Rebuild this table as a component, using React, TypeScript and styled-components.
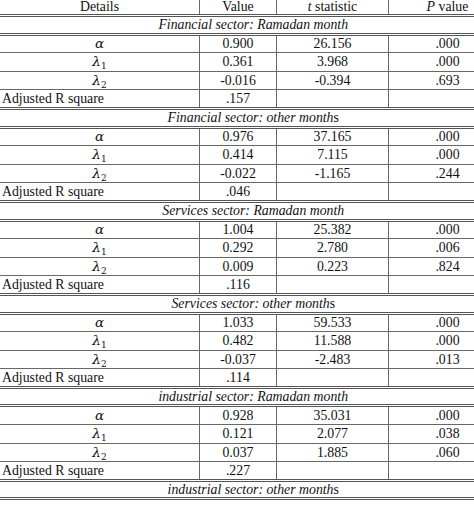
import React from "react";
import styled, { createGlobalStyle } from "styled-components";

interface Row {
  label: "alpha" | "l1" | "l2" | "adj";
  value: string;
  t?: string;
  p?: string;
}

interface Section {
  title: string;
  tail: string;
  rows: Row[];
}

const sections: Section[] = [
  {
    title: "Financial sector: Ramadan month",
    tail: "",
    rows: [
      { label: "alpha", value: "0.900", t: "26.156", p: ".000" },
      { label: "l1", value: "0.361", t: "3.968", p: ".000" },
      { label: "l2", value: "-0.016", t: "-0.394", p: ".693" },
      { label: "adj", value: ".157" },
    ],
  },
  {
    title: "Financial sector: other month",
    tail: "s",
    rows: [
      { label: "alpha", value: "0.976", t: "37.165", p: ".000" },
      { label: "l1", value: "0.414", t: "7.115", p: ".000" },
      { label: "l2", value: "-0.022", t: "-1.165", p: ".244" },
      { label: "adj", value: ".046" },
    ],
  },
  {
    title: "Services sector: Ramadan month",
    tail: "",
    rows: [
      { label: "alpha", value: "1.004", t: "25.382", p: ".000" },
      { label: "l1", value: "0.292", t: "2.780", p: ".006" },
      { label: "l2", value: "0.009", t: "0.223", p: ".824" },
      { label: "adj", value: ".116" },
    ],
  },
  {
    title: "Services sector: other month",
    tail: "s",
    rows: [
      { label: "alpha", value: "1.033", t: "59.533", p: ".000" },
      { label: "l1", value: "0.482", t: "11.588", p: ".000" },
      { label: "l2", value: "-0.037", t: "-2.483", p: ".013" },
      { label: "adj", value: ".114" },
    ],
  },
  {
    title: "industrial sector: Ramadan month",
    tail: "",
    rows: [
      { label: "alpha", value: "0.928", t: "35.031", p: ".000" },
      { label: "l1", value: "0.121", t: "2.077", p: ".038" },
      { label: "l2", value: "0.037", t: "1.885", p: ".060" },
      { label: "adj", value: ".227" },
    ],
  },
  {
    title: "industrial sector: other month",
    tail: "s",
    rows: [],
  },
];

const Label = ({ kind }: { kind: Row["label"] }) => {
  if (kind === "alpha") return <Greek>α</Greek>;
  if (kind === "adj") return <>Adjusted R square</>;
  return (
    <Greek>
      λ<Sub>{kind === "l1" ? "1" : "2"}</Sub>
    </Greek>
  );
};

const App = () => {
  return (
    <>
      <GlobalStyle />
      <Page>
        <Table>
          <colgroup>
            <col style={{ width: 200 }} />
            <col style={{ width: 77 }} />
            <col style={{ width: 112 }} />
            <col style={{ width: 118 }} />
          </colgroup>
          <thead>
            <HeadRow>
              <Cell>Details</Cell>
              <Cell>Value</Cell>
              <Cell>
                <i>t</i> statistic
              </Cell>
              <Cell>
                <i>P</i> value
              </Cell>
            </HeadRow>
          </thead>
          <tbody>
            {sections.map((s, i) => (
              <React.Fragment key={i}>
                <SectionRow>
                  <SectionCell colSpan={4}>
                    <i>{s.title}</i>
                    {s.tail}
                  </SectionCell>
                </SectionRow>
                {s.rows.map((r, j) => (
                  <DataRow key={j}>
                    <Cell $left={r.label === "adj"}>
                      <Label kind={r.label} />
                    </Cell>
                    <Cell>{r.value}</Cell>
                    <Cell>{r.t}</Cell>
                    <Cell>{r.p}</Cell>
                  </DataRow>
                ))}
              </React.Fragment>
            ))}
          </tbody>
        </Table>
      </Page>
    </>
  );
};

const GlobalStyle = createGlobalStyle`
  html, body {
    margin: 0;
    padding: 0;
    background: #ffffff;
    overflow: hidden;
  }
`;

const Page = styled.div`
  width: 474px;
  height: 505px;
  overflow: hidden;
  background: #fff;
  font-family: "Liberation Serif", "DejaVu Serif", serif;
  font-size: 13.8px;
  color: #111;
`;

const Table = styled.table`
  border-collapse: collapse;
  table-layout: fixed;
  width: 507px;
  margin-left: -1px;
`;

const HeadRow = styled.tr`
  height: 15px;
  border-bottom: 3px double #555;

  td {
    border-top: none;
    line-height: 14px;
    vertical-align: top;
  }
`;

const SectionRow = styled.tr`
  height: 18.6px;
  border-top: 3px double #555;
  border-bottom: 3px double #555;
`;

const DataRow = styled.tr`
  height: 18.6px;
`;

const Cell = styled.td<{ $left?: boolean }>`
  border: 1px solid #686868;
  padding: 0 2px;
  text-align: ${(p) => (p.$left ? "left" : "center")};
  vertical-align: middle;
  line-height: 15px;
  white-space: nowrap;
`;

const SectionCell = styled.td`
  padding: 0 2px;
  text-align: center;
  vertical-align: middle;
  line-height: 15px;
  border-left: 1px solid #686868;
`;

const Greek = styled.span`
  font-style: italic;
  font-family: "DejaVu Serif", "Liberation Serif", serif;
  font-size: 13.5px;
`;

const Sub = styled.sub`
  font-style: normal;
  font-size: 9px;
  vertical-align: -3px;
  line-height: 0;
`;

export default App;
